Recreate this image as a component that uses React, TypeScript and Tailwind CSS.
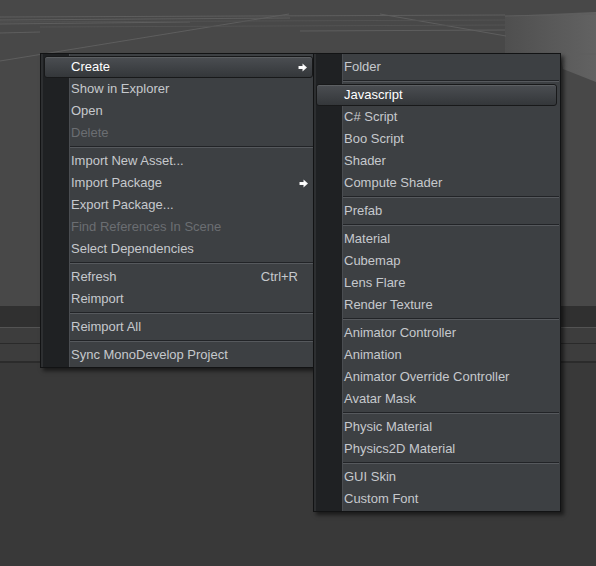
import React from "react";

type Item =
  | { sep: true }
  | {
      sep?: false;
      label: string;
      disabled?: boolean;
      highlight?: "left" | "right";
      arrow?: boolean;
      shortcut?: string;
    };

const leftItems: Item[] = [
  { label: "Create", highlight: "left", arrow: true },
  { label: "Show in Explorer" },
  { label: "Open" },
  { label: "Delete", disabled: true },
  { sep: true },
  { label: "Import New Asset..." },
  { label: "Import Package", arrow: true },
  { label: "Export Package..." },
  { label: "Find References In Scene", disabled: true },
  { label: "Select Dependencies" },
  { sep: true },
  { label: "Refresh", shortcut: "Ctrl+R" },
  { label: "Reimport" },
  { sep: true },
  { label: "Reimport All" },
  { sep: true },
  { label: "Sync MonoDevelop Project" },
];

const rightItems: Item[] = [
  { label: "Folder" },
  { sep: true },
  { label: "Javascript", highlight: "right" },
  { label: "C# Script" },
  { label: "Boo Script" },
  { label: "Shader" },
  { label: "Compute Shader" },
  { sep: true },
  { label: "Prefab" },
  { sep: true },
  { label: "Material" },
  { label: "Cubemap" },
  { label: "Lens Flare" },
  { label: "Render Texture" },
  { sep: true },
  { label: "Animator Controller" },
  { label: "Animation" },
  { label: "Animator Override Controller" },
  { label: "Avatar Mask" },
  { sep: true },
  { label: "Physic Material" },
  { label: "Physics2D Material" },
  { sep: true },
  { label: "GUI Skin" },
  { label: "Custom Font" },
];

function Arrow() {
  return (
    <svg width="10" height="9" viewBox="0 0 10 9" className="ml-auto mr-[4px]">
      <polygon points="0.5,3 4.5,3 4.5,0.5 9,4.5 4.5,8.5 4.5,6 0.5,6" fill="#ffffff" opacity="0.95" />
      <polygon points="1,3.6 5,3.6 5,2 7.6,4.5 5,7 5,5.4 1,5.4" fill="#ffffff" />
    </svg>
  );
}

function Row({ item }: { item: Item }) {
  if (item.sep) {
    return (
      <div className="h-[6px] flex items-center ml-[28px]">
        <div className="w-full h-0 border-t border-b border-t-[#222427] border-b-[#56595d]" />
      </div>
    );
  }
  const base = "h-[22px] flex items-center leading-[22px] whitespace-nowrap";
  const color = item.highlight
    ? "text-white"
    : item.disabled
    ? "text-[#6b6e72]"
    : "text-[#c6c9cd]";
  if (item.highlight) {
    const hl =
      item.highlight === "left"
        ? "ml-[2px] mt-px h-[21px] pl-[26px]"
        : "ml-[1px] mr-[2px] pl-[27px]";
    return (
      <div
        className={`${base} ${hl} ${color} rounded-[3px] border border-[#18191a] bg-[linear-gradient(to_bottom,#4b4e52,#34373a)] shadow-[inset_0_1px_0_rgba(255,255,255,0.10)]`}
      >
        <span>{item.label}</span>
        {item.arrow && <Arrow />}
      </div>
    );
  }
  return (
    <div className={`${base} pl-[29px] ${color}`}>
      <span>{item.label}</span>
      {item.arrow && <Arrow />}
      {item.shortcut && <span className="ml-auto mr-[15px]">{item.shortcut}</span>}
    </div>
  );
}

function Menu({ items, className }: { items: Item[]; className: string }) {
  return (
    <div
      className={`absolute border border-[#121314] px-px pb-px shadow-[3px_3px_4px_rgba(0,0,0,0.55)] bg-[linear-gradient(to_right,#2d2f31_0px,#2d2f31_2px,#1f2123_2px,#1f2123_28px,#4a4d51_28px,#4a4d51_29px,#3d4043_29px)] ${className}`}
    >
      {items.map((it, i) => (
        <Row key={i} item={it} />
      ))}
    </div>
  );
}

export default function App() {
  return (
    <div className="relative w-[596px] h-[566px] overflow-hidden bg-[#393939] font-['Liberation_Sans',Arial,sans-serif] text-[13px]">
      {/* scene view */}
      <div className="relative h-[306px] bg-[#484848]">
        <svg className="absolute inset-0" width="596" height="306" viewBox="0 0 596 306">
          <defs>
            <linearGradient id="sky" x1="0" y1="0" x2="1" y2="0">
              <stop offset="0" stopColor="#4f4f4f" />
              <stop offset="1" stopColor="#626262" />
            </linearGradient>
          </defs>
          <polygon points="505,16 596,12 596,82 563,69 560,53 505,53" fill="url(#sky)" />
          <g stroke="#5e5e5e" strokeWidth="1" fill="none">
            <line x1="0" y1="17" x2="505" y2="15" />
            <line x1="0" y1="20" x2="290" y2="18" />
            <line x1="0" y1="24" x2="190" y2="22" />
            <line x1="0" y1="33" x2="40" y2="32" />
            <line x1="300" y1="31" x2="505" y2="30" />
            <line x1="0" y1="61" x2="289" y2="14" />
            <line x1="380" y1="14" x2="506" y2="36" />
            <line x1="505" y1="16" x2="596" y2="14" />
            <line x1="560" y1="54" x2="596" y2="54" />
          </g>
          <g stroke="#535353" strokeWidth="1" fill="none">
            <line x1="0" y1="22" x2="505" y2="20" />
            <line x1="40" y1="27" x2="505" y2="25" />
          </g>
        </svg>
      </div>
      <div className="h-[21px] bg-[#303030]" />
      <div className="h-[16px] bg-[#3d3d3d] border-t border-[#535353]" />
      <div className="h-[18px] bg-[#3d3d3d] border-t border-[#2a2a2a]" />
      <div className="h-[2px] bg-[#2b2b2b]" />

      <Menu items={leftItems} className="left-[40px] top-[53px] w-[275px] pt-px" />
      <Menu items={rightItems} className="left-[313px] top-[53px] w-[248px] pt-[2px]" />
    </div>
  );
}
